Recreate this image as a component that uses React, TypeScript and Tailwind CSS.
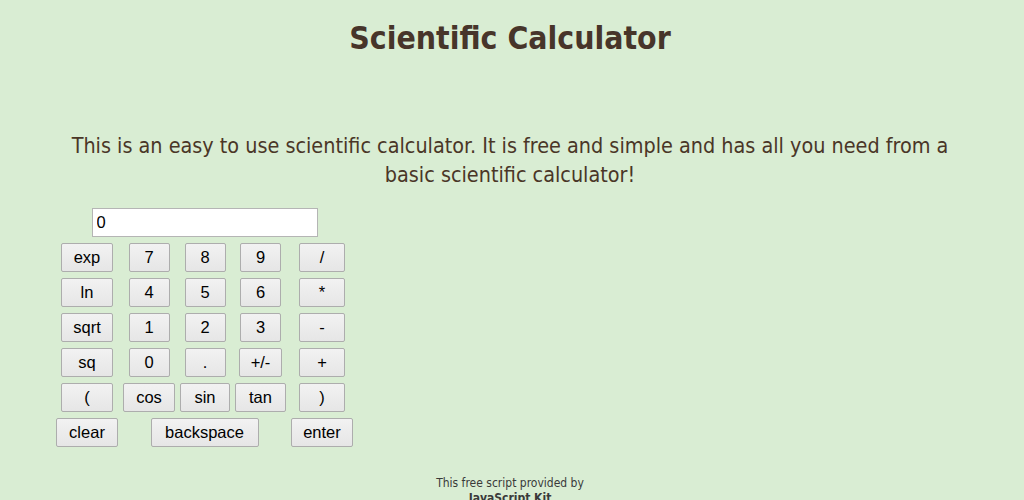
import { useState } from 'react';

const rows: string[][] = [
    ['exp', '7', '8', '9', '/'],
    ['ln', '4', '5', '6', '*'],
    ['sqrt', '1', '2', '3', '-'],
    ['sq', '0', '.', '+/-', '+'],
    ['(', 'cos', 'sin', 'tan', ')'],
];

const widths: Record<string, string> = {
    exp: 'w-[52px]', ln: 'w-[52px]', sqrt: 'w-[52px]', sq: 'w-[52px]', '(': 'w-[52px]',
    '/': 'w-[46px]', '*': 'w-[46px]', '-': 'w-[46px]', '+': 'w-[46px]', ')': 'w-[46px]',
    '+/-': 'w-[43px]', cos: 'w-[52px]', sin: 'w-[50px]', tan: 'w-[51px]',
};

const btn =
    'h-[29px] border border-[#adadad] rounded-[2px] bg-gradient-to-b from-[#f2f2f2] to-[#e6e6e6] text-[16.5px] text-black leading-none font-["Liberation_Sans",Arial,sans-serif] cursor-pointer';

function Key({ label, onPress }: { label: string; onPress: (k: string) => void }) {
    return (
        <button className={`${btn} ${widths[label] ?? 'w-[41px]'}`} onClick={() => onPress(label)}>
            {label}
        </button>
    );
}

export default function App() {
    const [display, setDisplay] = useState('0');

    const press = (k: string) => {
        if (k === 'clear') return setDisplay('0');
        if (k === 'backspace') return setDisplay((d) => (d.length > 1 ? d.slice(0, -1) : '0'));
        if (k === 'enter') {
            try {
                // eslint-disable-next-line no-new-func
                const v = Function(`"use strict";return (${display})`)();
                setDisplay(String(v));
            } catch {
                setDisplay('Error');
            }
            return;
        }
        setDisplay((d) => (d === '0' ? k : d + k));
    };

    return (
        <div className="min-h-[500px] bg-[#d9edd3] text-[#4a3627] pr-[4px] overflow-hidden">
            <h1 className='pt-[18px] text-center text-[31.7px] font-bold leading-[40px] font-["DejaVu_Sans_Condensed","DejaVu_Sans",sans-serif] text-[#47352a]'>
                Scientific Calculator
            </h1>

            <p className='mt-[73px] mx-auto max-w-[910px] text-center text-[21.4px] leading-[29px] font-["DejaVu_Sans_Condensed","DejaVu_Sans",sans-serif] text-[#4a3627]'>
                This is an easy to use scientific calculator. It is free and simple and has all you need from a basic scientific calculator!
            </p>

            <div className="ml-[54px] mt-[19px] grid grid-cols-[66px_58px_54px_57px_66px] w-fit gap-y-[6px] items-center justify-items-center">
                <input
                    value={display}
                    onChange={(e) => setDisplay(e.target.value)}
                    className='col-span-5 w-[226px] h-[29px] border border-[#b5b5b5] bg-white px-[4px] text-[16.5px] text-black font-["Liberation_Sans",Arial,sans-serif] outline-none'
                />
                {rows.map((row) =>
                    row.map((k) => <Key key={k} label={k} onPress={press} />),
                )}
                <button className={`${btn} w-[62px]`} onClick={() => press('clear')}>clear</button>
                <button className={`${btn} col-span-3 w-[108px]`} onClick={() => press('backspace')}>backspace</button>
                <button className={`${btn} w-[62px]`} onClick={() => press('enter')}>enter</button>
            </div>

            <div className='mt-[29px] text-center text-[12px] leading-[15px] font-["DejaVu_Sans_Condensed","DejaVu_Sans",sans-serif] text-[#3a3a3a]'>
                This free script provided by
                <br />
                <span className="font-bold">JavaScript Kit</span>
            </div>
        </div>
    );
}
